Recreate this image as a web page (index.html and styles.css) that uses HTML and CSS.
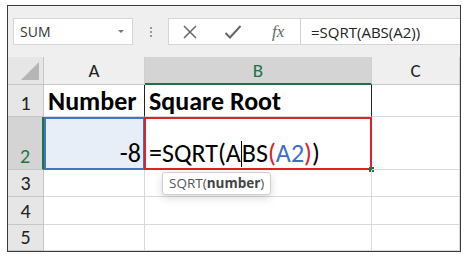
FILE: index.html
```html
<!DOCTYPE html>
<html lang="en">
<head>
    <meta charset="UTF-8">
    <meta name="viewport" content="width=device-width, initial-scale=1.0">
    <title>SQRT ABS - Excel</title>
    <link rel="stylesheet" href="styles.css">
</head>
<body>
    <div class="window">
        <!-- Barra de fórmulas -->
        <div class="formula-bar">
            <div class="name-box">
                <span>SUM</span>
                <span class="arrow"></span>
            </div>
            <div class="grip">
                <span></span><span></span><span></span>
            </div>
            <div class="edit-box">
                <div class="buttons">
                    <svg width="16" height="16" viewBox="0 0 16 16">
                        <path d="M2 2 L14 14 M14 2 L2 14" stroke="#666" stroke-width="1.5" fill="none"/>
                    </svg>
                    <svg width="18" height="16" viewBox="0 0 18 16">
                        <path d="M1.5 9 L6 13.5 L16.5 2" stroke="#666" stroke-width="2" fill="none"/>
                    </svg>
                    <span class="fx">fx</span>
                </div>
                <div class="formula">=SQRT(ABS(A2))</div>
            </div>
        </div>

        <!-- Planilha -->
        <div class="sheet">
            <div class="corner"><span class="triangle"></span></div>
            <div class="col-head">A</div>
            <div class="col-head selected">B</div>
            <div class="col-head">C</div>

            <div class="row-head">1</div>
            <div class="cell bold">Number</div>
            <div class="cell bold col-b">Square Root</div>
            <div class="cell"></div>

            <div class="row-head selected">2</div>
            <div class="cell ref right">-8</div>
            <div class="cell editing">=SQRT(A<span class="caret"></span>BS<span class="red">(</span><span class="blue">A2</span><span class="red">)</span>)<span class="handle"></span></div>
            <div class="cell"></div>

            <div class="row-head">3</div>
            <div class="cell"></div>
            <div class="cell tip-holder">
                <div class="tooltip">SQRT(<b>number</b>)</div>
            </div>
            <div class="cell"></div>

            <div class="row-head">4</div>
            <div class="cell"></div>
            <div class="cell"></div>
            <div class="cell"></div>

            <div class="row-head">5</div>
            <div class="cell"></div>
            <div class="cell"></div>
            <div class="cell"></div>
        </div>
    </div>
</body>
</html>
```

FILE: styles.css
```css
/* Estilos globais */
body {
    margin: 0;
    padding: 0;
    background-color: #fff;
    font-family: Carlito, Lato, sans-serif;
    color: #000;
}

.window {
    width: 454px;
    margin: 5px 0 0 7px;
    border: 1px solid #3c3c3c;
    box-sizing: border-box;
    background-color: #efefef;
}

/* Barra de fórmulas */
.formula-bar {
    display: flex;
    height: 51px;
    padding: 12px 0 12px 5px;
    box-sizing: border-box;
    font-family: "Open Sans", sans-serif;
}

.name-box {
    width: 120px;
    display: flex;
    align-items: center;
    justify-content: space-between;
    padding: 0 8px 0 6px;
    box-sizing: border-box;
    background-color: #fff;
    border: 1px solid #d6d6d6;
    font-size: 14px;
    color: #333;
}

.arrow {
    width: 0;
    height: 0;
    border-left: 3px solid transparent;
    border-right: 3px solid transparent;
    border-top: 3px solid #777;
}

.grip {
    width: 35px;
    display: flex;
    flex-direction: column;
    align-items: center;
    justify-content: center;
    gap: 2px;
}

.grip span {
    width: 2px;
    height: 2px;
    background-color: #999;
}

.edit-box {
    flex: 1;
    display: flex;
    background-color: #fff;
    border: 1px solid #d6d6d6;
    border-right: none;
}

.buttons {
    width: 132px;
    display: flex;
    align-items: center;
    padding-left: 13px;
    gap: 26px;
    box-sizing: border-box;
    border-right: 1px solid #d0d0d0;
}

.fx {
    font-family: "Liberation Serif", serif;
    font-style: italic;
    font-size: 17px;
    color: #666;
    margin-left: 4px;
}

.formula {
    display: flex;
    align-items: center;
    padding-left: 10px;
    font-size: 15px;
    color: #222;
}

/* Grade */
.sheet {
    display: grid;
    grid-template-columns: 36px 101px 227px 1fr;
    grid-template-rows: 28px 32px 53px 27px 28px 26px;
    background-color: #fff;
}

.corner {
    position: relative;
    background-color: #e6e6e6;
    border-right: 1px solid #c6c6c6;
    border-bottom: 1px solid #c6c6c6;
}

.triangle {
    position: absolute;
    right: 4px;
    bottom: 4px;
    width: 0;
    height: 0;
    border-left: 18px solid transparent;
    border-bottom: 18px solid #b5b5b5;
}

.col-head {
    display: flex;
    align-items: center;
    justify-content: center;
    background-color: #efefef;
    border-right: 1px solid #d0d0d0;
    border-bottom: 1px solid #c6c6c6;
    font-size: 19px;
    color: #222;
}

.col-head.selected {
    background-color: #d4d4d4;
    color: #217346;
    border-bottom: 2px solid #217346;
}

.row-head {
    display: flex;
    align-items: flex-end;
    justify-content: center;
    padding-bottom: 1px;
    background-color: #e6e6e6;
    border-right: 1px solid #c6c6c6;
    border-bottom: 1px solid #c6c6c6;
    font-size: 20px;
    color: #222;
    box-sizing: border-box;
}

.row-head.selected {
    background-color: #d4d4d4;
    color: #217346;
    border-right: 2px solid #217346;
}

.cell {
    position: relative;
    display: flex;
    align-items: flex-end;
    padding: 0 2px 0 4px;
    border-right: 1px solid #d9d9d9;
    border-bottom: 1px solid #d9d9d9;
    font-size: 26px;
    line-height: 30px;
    box-sizing: border-box;
    white-space: nowrap;
}

.cell.bold {
    font-weight: bold;
}

.cell.col-b {
    border-left: 1px solid #222;
    border-right: 1px solid #222;
    margin-left: -1px;
}

.cell.right {
    justify-content: flex-end;
}

.cell.ref {
    background-color: #e8eef8;
    border: 2px solid #4472c4;
}

.cell.editing {
    border: 2px solid #e0202a;
    margin-left: -1px;
    padding-left: 3px;
    overflow: visible;
}

.caret {
    display: inline-block;
    width: 0;
    height: 26px;
    border-left: 1px solid #000;
    margin-bottom: 1px;
    align-self: flex-end;
}

.red {
    color: #e0202a;
}

.blue {
    color: #3a6ec8;
}

.handle {
    position: absolute;
    right: -4px;
    bottom: -4px;
    width: 5px;
    height: 5px;
    background-color: #217346;
}

/* Dica da função */
.tip-holder {
    overflow: visible;
}

.tooltip {
    position: absolute;
    left: 17px;
    top: 2px;
    padding: 1px 6px 2px;
    background-color: #fff;
    border: 1px solid #cfcfcf;
    border-radius: 3px;
    box-shadow: 0 3px 8px rgba(0, 0, 0, 0.15);
    font-family: "Open Sans", sans-serif;
    font-size: 13.5px;
    line-height: 18px;
    color: #555;
}

.tooltip b {
    color: #444;
}
```
